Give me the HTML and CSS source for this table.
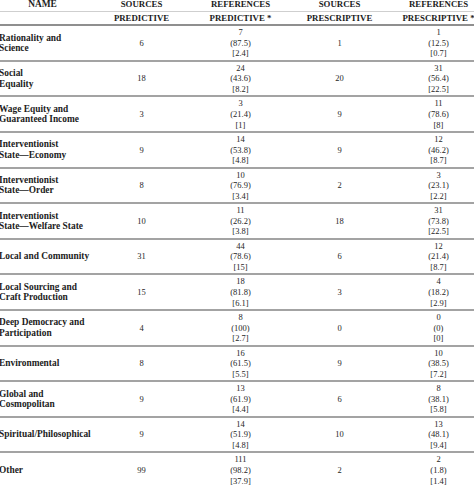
FILE: index.html
```html
<!DOCTYPE html>
<html>
<head>
<meta charset="utf-8">
<link rel="stylesheet" href="styles.css">
</head>
<body>
<div class="tbl">
  <div class="row head1">
    <div class="name hname">NAME</div><div>SOURCES</div><div>REFERENCES</div><div>SOURCES</div><div>REFERENCES</div>
  </div>
  <div class="row head2">
    <div class="name"></div><div>PREDICTIVE</div><div>PREDICTIVE *</div><div>PRESCRIPTIVE</div><div>PRESCRIPTIVE *</div>
  </div>
  <div class="row body"><div class="name">Rationality and<br>Science</div><div class="num">6</div><div class="num">7<br>(87.5)<br>[2.4]</div><div class="num">1</div><div class="num">1<br>(12.5)<br>[0.7]</div></div>
  <div class="row body"><div class="name">Social<br>Equality</div><div class="num">18</div><div class="num">24<br>(43.6)<br>[8.2]</div><div class="num">20</div><div class="num">31<br>(56.4)<br>[22.5]</div></div>
  <div class="row body"><div class="name">Wage Equity and<br>Guaranteed Income</div><div class="num">3</div><div class="num">3<br>(21.4)<br>[1]</div><div class="num">9</div><div class="num">11<br>(78.6)<br>[8]</div></div>
  <div class="row body"><div class="name">Interventionist<br>State—Economy</div><div class="num">9</div><div class="num">14<br>(53.8)<br>[4.8]</div><div class="num">9</div><div class="num">12<br>(46.2)<br>[8.7]</div></div>
  <div class="row body"><div class="name">Interventionist<br>State—Order</div><div class="num">8</div><div class="num">10<br>(76.9)<br>[3.4]</div><div class="num">2</div><div class="num">3<br>(23.1)<br>[2.2]</div></div>
  <div class="row body"><div class="name">Interventionist<br>State—Welfare State</div><div class="num">10</div><div class="num">11<br>(26.2)<br>[3.8]</div><div class="num">18</div><div class="num">31<br>(73.8)<br>[22.5]</div></div>
  <div class="row body"><div class="name">Local and Community</div><div class="num">31</div><div class="num">44<br>(78.6)<br>[15]</div><div class="num">6</div><div class="num">12<br>(21.4)<br>[8.7]</div></div>
  <div class="row body"><div class="name">Local Sourcing and<br>Craft Production</div><div class="num">15</div><div class="num">18<br>(81.8)<br>[6.1]</div><div class="num">3</div><div class="num">4<br>(18.2)<br>[2.9]</div></div>
  <div class="row body"><div class="name">Deep Democracy and<br>Participation</div><div class="num">4</div><div class="num">8<br>(100)<br>[2.7]</div><div class="num">0</div><div class="num">0<br>(0)<br>[0]</div></div>
  <div class="row body"><div class="name">Environmental</div><div class="num">8</div><div class="num">16<br>(61.5)<br>[5.5]</div><div class="num">9</div><div class="num">10<br>(38.5)<br>[7.2]</div></div>
  <div class="row body"><div class="name">Global and<br>Cosmopolitan</div><div class="num">9</div><div class="num">13<br>(61.9)<br>[4.4]</div><div class="num">6</div><div class="num">8<br>(38.1)<br>[5.8]</div></div>
  <div class="row body"><div class="name">Spiritual/Philosophical</div><div class="num">9</div><div class="num">14<br>(51.9)<br>[4.8]</div><div class="num">10</div><div class="num">13<br>(48.1)<br>[9.4]</div></div>
  <div class="row body"><div class="name">Other</div><div class="num">99</div><div class="num">111<br>(98.2)<br>[37.9]</div><div class="num">2</div><div class="num">2<br>(1.8)<br>[1.4]</div></div>
</div>
</body>
</html>
```
FILE: styles.css
```css
html, body {
  margin: 0;
  padding: 0;
  overflow: hidden;
  background: #fff;
}
body {
  font-family: "Liberation Serif", "DejaVu Serif", serif;
  color: #1c1c1c;
}
.tbl {
  width: 495px;
  margin: -3px 0 0 -7px;
}
.row {
  display: grid;
  grid-template-columns: 99px 99px 99px 99px 99px;
  align-items: center;
  text-align: center;
  box-sizing: border-box;
  white-space: nowrap;
}
.head1, .head2 {
  font-weight: bold;
  font-size: 8.8px;
  line-height: 10px;
}
.head1 {
  height: 15px;
  border-bottom: 1px solid #cfcfcf;
}
.head2 {
  height: 14.3px;
  border-bottom: 2px solid #8f8f8f;
}
.body {
  height: 35.6px;
  border-bottom: 2px solid #a3a3a3;
}
.name {
  text-align: left;
  padding-left: 6px;
  font-weight: bold;
  font-size: 9.4px;
  line-height: 10.4px;
}
.head1 .hname {
  text-align: center;
  padding-left: 0;
}
.num {
  font-size: 8.5px;
  line-height: 10.6px;
  color: #262626;
}
```
